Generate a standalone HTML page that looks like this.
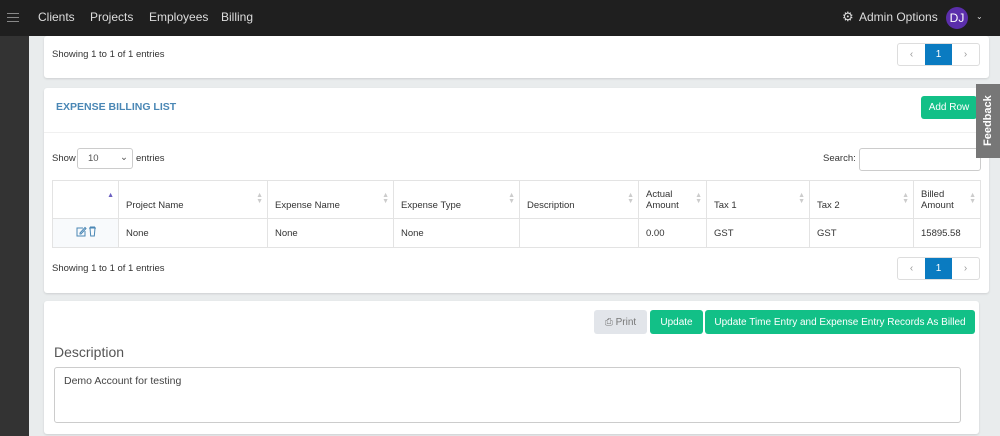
<!DOCTYPE html>
<html><head><style>
*{box-sizing:border-box;margin:0;padding:0}
body{width:1000px;height:436px;overflow:hidden;background:#e9eced;font-family:"Liberation Sans",sans-serif;color:#333;position:relative;font-size:10px}
.top{position:absolute;left:0;top:0;width:1000px;height:36px;background:#1f1f1f;color:#ddd;font-size:12px}
.top span{position:absolute;top:10px}
.side{position:absolute;left:0;top:36px;width:29px;height:400px;background:#333}
.card{position:absolute;background:#fff;border-radius:3px;box-shadow:0 1px 2px rgba(0,0,0,.12)}
.pg{position:absolute;display:flex;height:23px;border:1px solid #ddd;border-radius:3px;font-size:10px}
.pg div{width:27px;display:flex;align-items:center;justify-content:center;color:#999}
.pg .a{background:#0a7bc1;color:#fff}
.btn{position:absolute;background:#12c087;color:#fff;border-radius:3px;font-size:10px;display:flex;align-items:center;justify-content:center}
table{position:absolute;left:52px;top:180px;width:929px;border-collapse:collapse;font-size:9.5px}
td,th{border:1px solid #e3e3e3;padding:0 7px;text-align:left;font-weight:normal;position:relative}
th{height:38px;vertical-align:bottom;padding-bottom:7px;color:#333}
td{height:29px}
.s{position:absolute;right:4px;top:12px;color:#ccc;font-size:7px;line-height:6px}
</style></head><body>
<div class="top">
<div style="position:absolute;left:7px;top:13px;width:12px;height:1px;background:#888;box-shadow:0 4px 0 #888,0 8px 0 #888"></div>
<span style="left:38px">Clients</span><span style="left:90px">Projects</span><span style="left:149px">Employees</span><span style="left:221px">Billing</span>
<span style="left:842px;font-size:13px;top:9px">⚙</span><span style="left:859px">Admin Options</span>
<div style="position:absolute;left:946px;top:7px;width:22px;height:22px;border-radius:50%;background:#5b2eab;color:#fff;font-size:12px;display:flex;align-items:center;justify-content:center">DJ</div>
<span style="left:976px;font-size:8px;top:12px">⌄</span>
</div>
<div class="side"></div>
<div class="card" style="left:44px;top:36px;width:945px;height:42px"></div>
<div style="position:absolute;left:52px;top:49px;font-size:9.5px">Showing 1 to 1 of 1 entries</div>
<div class="pg" style="left:897px;top:43px"><div>‹</div><div class="a">1</div><div>›</div></div>

<div class="card" style="left:44px;top:88px;width:945px;height:205px"></div>
<div style="position:absolute;left:56px;top:101px;color:#4a87b5;font-weight:bold;font-size:10.5px">EXPENSE BILLING LIST</div>
<div class="btn" style="left:921px;top:96px;width:56px;height:23px">Add Row</div>
<div style="position:absolute;left:44px;top:132px;width:945px;height:1px;background:#f0f0f0"></div>
<div style="position:absolute;left:52px;top:153px;font-size:9.5px">Show</div>
<div style="position:absolute;left:77px;top:148px;width:56px;height:21px;border:1px solid #ccc;border-radius:3px;font-size:9.5px;padding:4px 10px;color:#555">10<span style="position:absolute;right:4px;top:3px">⌄</span></div>
<div style="position:absolute;left:136px;top:153px;font-size:9.5px">entries</div>
<div style="position:absolute;left:823px;top:153px;font-size:9.5px">Search:</div>
<div style="position:absolute;left:859px;top:148px;width:122px;height:23px;border:1px solid #ccc;border-radius:3px"></div>
<div style="position:absolute;left:976px;top:84px;width:24px;height:74px;background:#777;color:#fff;font-size:11px;font-weight:bold;writing-mode:vertical-rl;transform:rotate(180deg);display:flex;align-items:center;justify-content:center">Feedback</div>
<table>
<tr><th style="width:66px"><span class="s" style="color:#6b5fc0;top:12px">▲</span></th><th style="width:149px">Project Name<span class="s">▲<br>▼</span></th><th style="width:126px">Expense Name<span class="s">▲<br>▼</span></th><th style="width:126px">Expense Type<span class="s">▲<br>▼</span></th><th style="width:119px">Description<span class="s">▲<br>▼</span></th><th style="width:68px">Actual<br>Amount<span class="s">▲<br>▼</span></th><th style="width:103px">Tax 1<span class="s">▲<br>▼</span></th><th style="width:104px">Tax 2<span class="s">▲<br>▼</span></th><th>Billed<br>Amount<span class="s">▲<br>▼</span></th></tr>
<tr><td style="background:#f8fafc;text-align:center"><svg width="22" height="11" viewBox="0 0 22 11" fill="none" stroke="#4a87b5" stroke-width="1"><path d="M8 2H2v8h8V5M5 7l5-5.5 1 1-5 5.5H5z"/><path d="M14 2h7M15.5 2v-1h4v1M15 2l.7 8h3.6L20 2"/></svg></td><td>None</td><td>None</td><td>None</td><td></td><td>0.00</td><td>GST</td><td>GST</td><td>15895.58</td></tr>
</table>
<div style="position:absolute;left:52px;top:263px;font-size:9.5px">Showing 1 to 1 of 1 entries</div>
<div class="pg" style="left:897px;top:257px"><div>‹</div><div class="a">1</div><div>›</div></div>

<div class="card" style="left:44px;top:301px;width:935px;height:133px"></div>
<div class="btn" style="left:594px;top:310px;width:53px;height:24px;background:#e2e5ea;color:#777">⎙ Print</div>
<div class="btn" style="left:650px;top:310px;width:53px;height:24px">Update</div>
<div class="btn" style="left:705px;top:310px;width:270px;height:24px">Update Time Entry and Expense Entry Records As Billed</div>
<div style="position:absolute;left:54px;top:344px;font-size:14px;color:#555">Description</div>
<div style="position:absolute;left:54px;top:367px;width:907px;height:56px;border:1px solid #ccc;border-radius:3px;padding:7px 9px;font-size:10.5px;color:#444">Demo Account for testing</div>
</body></html>
